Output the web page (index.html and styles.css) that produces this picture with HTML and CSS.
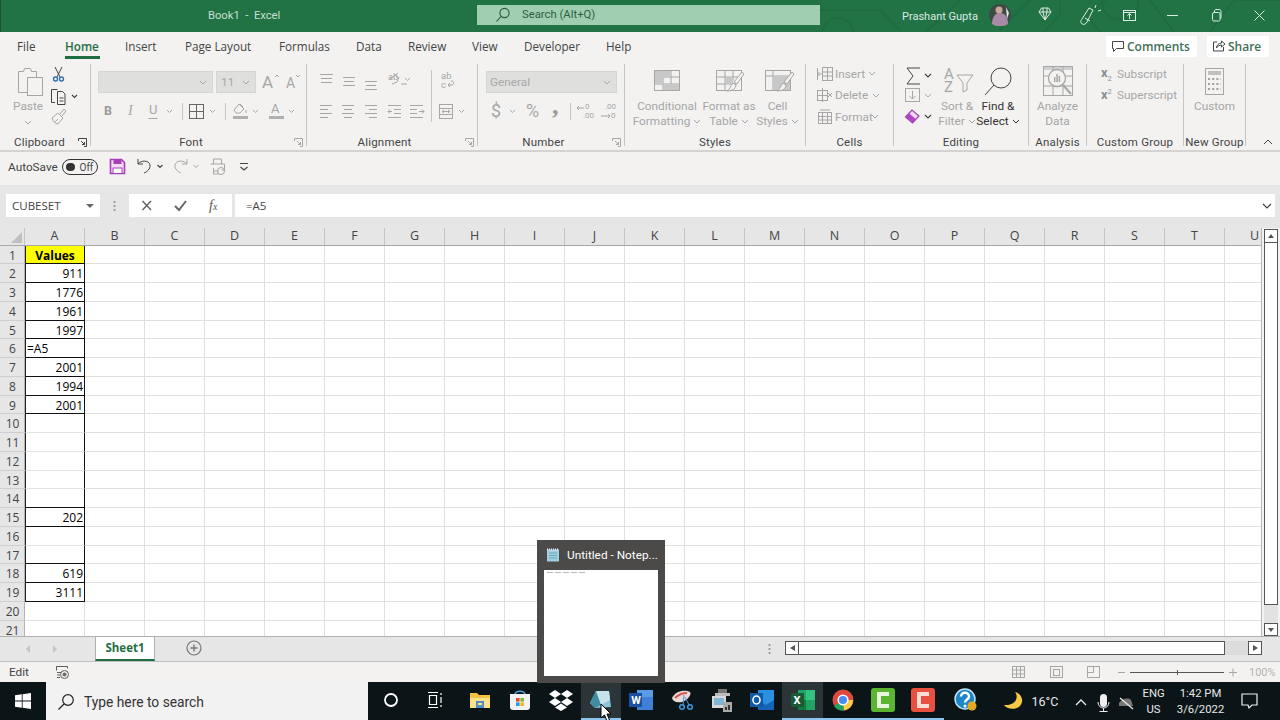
FILE: index.html
```html
<!DOCTYPE html>
<html lang="en">
<head>
<meta charset="utf-8">
<title>Book1 - Excel</title>
<link rel="stylesheet" href="styles.css">
</head>
<body>
<div class="app">
  <header class="titlebar">
    <svg class="circuit" width="460" height="32" viewBox="820 0 460 32"><g class="pat"><path d="M820 10h60l20 20M960 0l-34 32M1000 30l30-30M1060 0v14l-16 18M1100 32l-14-18 20-14M1150 0l24 32M1210 32l24-32h46"/><circle cx="838" cy="34" r="16"/><circle cx="1120" cy="2" r="18"/></g></svg>
    <div class="doc">Book1 &nbsp;-&nbsp; Excel</div>
    <div class="search"><svg width="16" height="16" viewBox="0 0 16 16"><circle cx="9.5" cy="6" r="4.6" class="gs"/><path d="M6 9.5 1.5 14.5" class="gs"/></svg><span>Search (Alt+Q)</span></div>
    <div class="user">Prashant Gupta</div>
    <svg class="winctl" width="295" height="32" viewBox="985 0 295 32">
      <circle cx="1000" cy="15" r="11" fill="#3d4a45"/><path d="M992 24c0-8 4-11 8-11s8 3 8 11l-4 2h-8z" fill="#a98aa5"/><circle cx="999" cy="10" r="3.5" fill="#c9a99a"/><path d="M1006 7l3 6-2 6z" fill="#e8e8e8"/>
      <g class="w"><path d="M1039 12l2.500-4h7l2.500 4-6 8zM1039 12h12M1043 12l2 8 2-8M1043 8l0 4M1047 8v4"/>
      <path d="M1082 24c-2-2-1-4 0-5l7-11 4 2-6 12c-1 2-3 3-5 2zM1085 18l5 3M1095 8l1-3M1098 11l3-1"/>
      <rect x="1123.500" y="10.500" width="12" height="10"/><path d="M1123.500 12.500h12M1129.500 19v-5M1127.500 15.500l2-2 2 2"/>
      <path d="M1167 15.500h11"/>
      <rect x="1212.500" y="12.500" width="7.500" height="8.500" rx="1.500"/><path d="M1214.500 12.500v-1.500c0-1 .5-1.500 1.500-1.500h3c1.500 0 2 1 2 2v6c0 1-.5 1.500-1 1.500"/>
      <path d="M1254.500 10.500l10 10M1264.500 10.500l-10 10"/></g>
    </svg>
  </header>

  <nav class="tabs">
    <div class="tab">File</div>
    <div class="tab on">Home</div>
    <div class="tab">Insert</div>
    <div class="tab">Page Layout</div>
    <div class="tab">Formulas</div>
    <div class="tab">Data</div>
    <div class="tab">Review</div>
    <div class="tab">View</div>
    <div class="tab">Developer</div>
    <div class="tab">Help</div>
    <div class="tabspace"></div>
    <div class="pill comments"><svg width="14" height="14" viewBox="0 0 14 14"><path d="M1.500 2.500h11v7h-7l-3 3v-3h-1z" class="k"/></svg>Comments</div>
    <div class="pill share"><svg width="14" height="14" viewBox="0 0 14 14"><path d="M5 3H1.500v9h10V8M4.500 9c0-3 2.500-5 5-5V2l3.500 3-3.500 3V6c-2 0-4 1-5 3z" class="k"/></svg>Share</div>
  </nav>

  <section class="ribbon">
    <div class="group g-clip">
      <div class="gbody">
        <div class="big paste">
          <svg width="46" height="34" viewBox="5 64 46 34"><path class="d" d="M18.500 71.500h5l1-3h6l1 3h5v6M18.500 71.500v21h9"/><rect class="f" x="27.500" y="77.500" width="15" height="18"/></svg>
          <div class="l">Paste</div>
          <svg class="chev" viewBox="0 0 8 5"><path d="M1 1l3 3 3-3"/></svg>
        </div>
        <svg class="strip" width="39" height="70" viewBox="51 64 39 70">
          <path d="M55 67l5 10M62 67l-5 10" class="k"/><circle cx="55.500" cy="79" r="2" fill="none" stroke="#2b6fb3" stroke-width="1.300"/><circle cx="61.500" cy="79" r="2" fill="none" stroke="#2b6fb3" stroke-width="1.300"/>
          <path class="k" d="M55 102.500h-3.500v-13h6M57.500 91.500h5l2.500 2.500v10.500h-7.500zM59.500 98h4M59.500 101h4"/>
          <path class="kc" d="M72 95l2.500 2.500 2.500-2.500"/>
          <path class="d" d="M52 118l6-5 5 5-5 6c-3 0-5-3-6-6zM60 114l4-5 2 2-4 5M55 122l3-3"/>
        </svg>
      </div>
      <div class="glabel left"><span>Clipboard</span><svg class="launch" width="9" height="9" viewBox="0 0 9 9"><path class="k" d="M.5 3V.5h8v8H6M3 3l3.500 3.500M6.500 4v2.500H4"/></svg></div>
    </div>

    <div class="group g-font">
      <div class="gbody col">
        <div class="r1">
          <div class="combo c-name"><svg class="chev" viewBox="0 0 8 5"><path d="M1 1l3 3 3-3"/></svg></div>
          <div class="combo c-size"><span>11</span><svg class="chev" viewBox="0 0 8 5"><path d="M1 1l3 3 3-3"/></svg></div>
          <svg width="44" height="22" viewBox="258 71 44 22"><text x="261" y="88" class="ta a1">A</text><path class="d" d="M274 77l2-2 2 2"/><text x="285" y="88" class="ta a2">A</text><path class="d" d="M295 75l2 2 2-2"/></svg>
        </div>
        <svg class="r2" width="209" height="24" viewBox="98 99 209 24">
          <text x="104" y="115" class="tb bold">B</text><text x="128" y="115" class="tb ital">I</text><text x="149" y="114" class="tb">U</text><path class="d" d="M148.500 118.500h9"/>
          <path class="d" d="M167 110l2.500 2.500 2.500-2.500"/><path class="sep" d="M182.500 103v17"/>
          <rect class="k2" x="189.500" y="104.500" width="14" height="14"/><path class="k2" d="M196.500 104.500v14M189.500 111.500h14"/><path class="d" d="M210 110l2.500 2.500 2.500-2.500"/><path class="sep" d="M225.500 103v17"/>
          <path class="d" d="M234 110l5-6 5 5-4 4h-4zM240 104l3 3M246 110v3"/><rect x="233" y="116" width="15" height="3" fill="#b0b0b0"/><path class="d" d="M253 110l2.500 2.500 2.500-2.500"/>
          <text x="271" y="113" class="ta a3">A</text><rect x="269" y="116" width="15" height="3" fill="#b0b0b0"/><path class="d" d="M289 110l2.500 2.500 2.500-2.500"/>
        </svg>
      </div>
      <div class="glabel"><i></i><span>Font</span><svg class="launch" width="9" height="9" viewBox="0 0 9 9"><path class="d" d="M.5 3V.5h8v8H6M3 3l3.500 3.500M6.500 4v2.500H4"/></svg></div>
    </div>

    <div class="group g-align">
      <div class="gbody">
        <svg width="170" height="70" viewBox="307 64 170 70">
          <path class="d" d="M320 74.500h13M321 78.500h11M321 82.500h11M343 77.500h12M344 81.500h10M343 85.500h12M365 81.500h12M366 85.500h10M365 89.500h12"/>
          <path class="d" d="M389 80l9-7M392 84l5-2 2-5M401 84h6M395 74l3 4"/><text x="388" y="80" class="ts r">ab</text><path class="d" d="M405 78l2.500 2.500 2.500-2.500"/>
          <path class="sep" d="M431.500 70v52"/>
          <text x="441" y="79" class="ts">ab</text><text x="441" y="88" class="ts">c</text><path class="d" d="M448 85h4c2 0 2-4 0-4h-1M448 85l2-2M448 85l2 2"/>
          <path class="d" d="M320 105.500h12M320 109.500h8M320 113.500h12M320 117.500h8M342 105.500h12M344 109.500h8M342 113.500h12M344 117.500h8M365 105.500h12M369 109.500h8M365 113.500h12M369 117.500h8"/>
          <path class="d" d="M388 105.500h13M394 109.500h7M394 113.500h7M388 117.500h13M388 111.500h4M388 111.500l2-2M388 111.500l2 2M410 105.500h13M410 109.500h7M410 113.500h7M410 117.500h13M424 111.500h-5M424 111.500l-2-2M424 111.500l-2 2"/>
          <rect class="d" x="439.500" y="104.500" width="13" height="14"/><path class="d" d="M439.500 108.500h13M439.500 114.500h13M442 111.500h8M442 111.500l2-1.500M442 111.500l2 1.500M450 111.500l-2-1.500M450 111.500l-2 1.500"/><path class="d" d="M459 110l2.500 2.500 2.500-2.500"/>
        </svg>
      </div>
      <div class="glabel"><i></i><span>Alignment</span><svg class="launch" width="9" height="9" viewBox="0 0 9 9"><path class="d" d="M.5 3V.5h8v8H6M3 3l3.500 3.500M6.500 4v2.500H4"/></svg></div>
    </div>

    <div class="group g-num">
      <div class="gbody col">
        <div class="combo c-gen"><span>General</span><svg class="chev" viewBox="0 0 8 5"><path d="M1 1l3 3 3-3"/></svg></div>
        <svg class="r2" width="146" height="24" viewBox="478 99 146 24">
          <text x="491" y="117" class="tb big1">$</text><path class="d" d="M510 110l2.500 2.500 2.500-2.500"/>
          <text x="526" y="117" class="tb big1">%</text><text x="552" y="114" class="tb big2">,</text><path class="sep" d="M570.500 103v17"/>
          <text x="585" y="109" class="tx">0</text><text x="583" y="118" class="tx">.00</text><path class="d" d="M577 108h7M577 108l2-2M577 108l2 2"/>
          <text x="605" y="109" class="tx">.00</text><text x="611" y="118" class="tx">0</text><path class="d" d="M601 116h9M610 116l-2-2M610 116l-2 2"/>
        </svg>
      </div>
      <div class="glabel"><i></i><span>Number</span><svg class="launch" width="9" height="9" viewBox="0 0 9 9"><path class="d" d="M.5 3V.5h8v8H6M3 3l3.500 3.500M6.500 4v2.500H4"/></svg></div>
    </div>

    <div class="group g-styles">
      <div class="gbody">
        <div class="big w-cond">
          <svg width="84" height="34" viewBox="625 64 84 34"><rect class="d" x="654.500" y="70.500" width="25" height="20"/><path class="d" d="M654.500 77h25M654.500 84h25M663 70.500v20M671 70.500v20"/><rect x="655" y="71" width="16" height="6" fill="#c8c8c8"/><rect x="655" y="77" width="8" height="7" fill="#c8c8c8"/><rect x="663" y="84" width="16" height="6" fill="#c8c8c8"/></svg>
          <div class="l">Conditional</div>
          <div class="l">Formatting <svg class="chev" viewBox="0 0 8 5"><path d="M1 1l3 3 3-3"/></svg></div>
        </div>
        <div class="big w-fmt">
          <svg width="40" height="34" viewBox="709 64 40 34"><rect class="d" x="716.500" y="70.500" width="25" height="20"/><path class="d" d="M716.500 77h25M716.500 84h20M725 70.500v20M733 70.500v10"/><rect x="725" y="77" width="8" height="7" fill="#c8c8c8"/><path class="f" d="M742 72l2 2-7 10-3-2zM733 83l3 2c0 3-3 6-9 6 3-1 3-5 6-8z"/></svg>
          <div class="l">Format as</div>
          <div class="l">Table <svg class="chev" viewBox="0 0 8 5"><path d="M1 1l3 3 3-3"/></svg></div>
        </div>
        <div class="big w-cell">
          <svg width="57" height="34" viewBox="749 64 57 34"><rect class="d" x="765.500" y="70.500" width="25" height="20"/><path class="d" d="M765.500 76h25M773 70.500v20"/><rect x="773" y="76" width="17" height="14" fill="#c8c8c8"/><path class="f" d="M792 72l2 2-7 10-3-2zM783 83l3 2c0 3-3 6-9 6 3-1 3-5 6-8z"/></svg>
          <div class="l">Cell</div>
          <div class="l">Styles <svg class="chev" viewBox="0 0 8 5"><path d="M1 1l3 3 3-3"/></svg></div>
        </div>
      </div>
      <div class="glabel solo"><span>Styles</span></div>
    </div>

    <div class="group g-cells">
      <div class="gbody col rows">
        <div class="rowitem"><svg width="16" height="16" viewBox="0 0 16 16"><rect class="d" x="5.500" y="1.500" width="10" height="13"/><path class="d" d="M5.500 6h10M5.500 10h10M10.500 1.500v13M.5 8h5M.5 8l2-2M.5 8l2 2M.5 2v12"/></svg><span class="ct">Insert</span><svg class="chev c1" viewBox="0 0 8 5"><path d="M1 1l3 3 3-3"/></svg></div>
        <div class="rowitem"><svg width="16" height="16" viewBox="0 0 16 16"><rect class="d" x=".5" y="3.500" width="10" height="10"/><path class="d" d="M.5 8.500h10M5.500 1v14M11 6l4 4M15 6l-4 4"/></svg><span class="ct">Delete</span><svg class="chev c2" viewBox="0 0 8 5"><path d="M1 1l3 3 3-3"/></svg></div>
        <div class="rowitem"><svg width="16" height="16" viewBox="0 0 16 16"><rect class="d" x="1.500" y="3.500" width="13" height="11"/><path class="d" d="M1.500 7.500h13M1.500 11h13M5.500 3.500v11M10.500 3.500v11M3 1h10"/></svg><span class="ct">Format</span><svg class="chev c3" viewBox="0 0 8 5"><path d="M1 1l3 3 3-3"/></svg></div>
      </div>
      <div class="glabel solo"><span>Cells</span></div>
    </div>

    <div class="group g-edit">
      <div class="gbody">
        <svg width="41" height="70" viewBox="894 64 41 70">
          <path class="k" d="M920 68h-13l6 8-6 8h13"/><path class="kc" d="M925 74l3 3 3-3"/>
          <rect class="d" x="905.500" y="88.500" width="14" height="13"/><path class="d" d="M912.500 91v8M909.500 96l3 3 3-3M925 94l3 3 3-3"/>
          <path d="M905.500 117l6.500-7 7 6-6.500 7z" fill="#f1d6f5" stroke="#9a3fb0" stroke-width="1.200"/><path d="M905.500 117l3.500-3.700 7 6-3 3.700z" fill="#b146c2"/><path class="kc" d="M925 115l3 3 3-3"/>
        </svg>
        <div class="big w-sort">
          <svg width="44" height="34" viewBox="935 64 44 34"><text x="944" y="79" class="tl">A</text><text x="944" y="92" class="tl">Z</text><path class="d" d="M957 75h16l-6 8v7l-4 2v-9z"/></svg>
          <div class="l">Sort &amp;</div>
          <div class="l">Filter <svg class="chev" viewBox="0 0 8 5"><path d="M1 1l3 3 3-3"/></svg></div>
        </div>
        <div class="big w-find act">
          <svg width="38" height="34" viewBox="979 64 38 34"><circle cx="1001" cy="78" r="10" class="k"/><path class="k" d="M994 85l-9 10"/></svg>
          <div class="l">Find &amp;</div>
          <div class="l">Select <svg class="chev" viewBox="0 0 8 5"><path d="M1 1l3 3 3-3"/></svg></div>
        </div>
      </div>
      <div class="glabel solo"><span>Editing</span></div>
    </div>

    <div class="group g-an">
      <div class="gbody">
        <div class="big w-an">
          <svg width="57" height="34" viewBox="1029 64 57 34"><rect class="d" x="1043.500" y="66.500" width="29" height="29"/><path fill="#d0d0d0" d="M1044 67h28v3h-28z"/><path class="d" d="M1043.500 76h29M1043.500 86h29M1053 66.500v29M1063 66.500v29"/><circle cx="1057" cy="78" r="8.500" fill="#f3f2f1" stroke="#a6a6a6" stroke-width="1.300"/><path fill="#a6a6a6" d="M1054 77h1.500v5H1054zM1056.300 74h1.500v8h-1.500zM1058.600 76h1.500v6h-1.500z"/><path stroke="#a6a6a6" stroke-width="2" d="M1063 85l8 9"/></svg>
          <div class="l">Analyze</div>
          <div class="l">Data</div>
        </div>
      </div>
      <div class="glabel solo"><span>Analysis</span></div>
    </div>

    <div class="group g-cust">
      <div class="gbody col rows">
        <div class="rowitem"><b class="sc">x<sub>2</sub></b><span>Subscript</span></div>
        <div class="rowitem"><b class="sc">x<sup>2</sup></b><span>Superscript</span></div>
      </div>
      <div class="glabel solo"><span>Custom Group</span></div>
    </div>

    <div class="group g-new">
      <div class="gbody">
        <div class="big w-new">
          <svg width="61" height="34" viewBox="1184 64 61 34"><rect class="d" x="1205.500" y="68.500" width="18" height="26"/><rect x="1208" y="71" width="13" height="4" fill="#c0c0c0"/><path stroke="#a0a0a0" stroke-width="2" stroke-dasharray="2 2.200" d="M1208 79h13M1208 84h13M1208 89h13"/></svg>
          <div class="l">Custom</div>
        </div>
      </div>
      <div class="glabel solo"><span>New Group</span></div>
    </div>

    <div class="collapse"><svg width="10" height="6" viewBox="0 0 10 6"><path class="k" d="M1 5l4-4 4 4"/></svg></div>
  </section>

  <section class="qat">
    <span class="as">AutoSave</span>
    <div class="toggle"><i></i><span>Off</span></div>
    <svg width="180" height="20" viewBox="102 158 180 20">
      <path d="M110.500 160.500h11l3 3v11h-14z" fill="#f2dcf5" stroke="#a73cbc" stroke-width="1.600"/><rect x="113.500" y="160.500" width="8" height="4.500" fill="#a73cbc"/><rect x="113" y="169" width="9" height="5.500" fill="#fff" stroke="#a73cbc"/>
      <path class="k" d="M138 160v5h5M138 165c3-4 11-4 12 1 .5 4-3 7-6 8"/><path class="kc" d="M157.500 166l2.500 2.500 2.500-2.500"/>
      <path class="d" d="M187 160v5h-5M187 165c-3-4-11-4-12 1-.5 4 3 7 6 8"/><path class="d" d="M193.500 166l2.500 2.500 2.500-2.500"/>
      <path class="d" d="M213.500 165v-5h8v5M210.500 165h14v6h-3M213.500 172h5M213.500 169v6h5"/><circle class="d" cx="221" cy="172" r="3.500"/>
      <path class="kc" d="M240 164.500h8M240.500 168l3.500 3 3.500-3"/>
    </svg>
  </section>

  <section class="fbar">
    <div class="namebox"><span>CUBESET</span><i class="tri"></i></div>
    <div class="dots"></div>
    <div class="fxbox">
      <svg width="103" height="24" viewBox="129 194 103 24"><path d="M142.500 201l8.500 9M151 201l-8.500 9" stroke="#666" stroke-width="1.500" fill="none"/><path d="M175 206l4 4 7-9" stroke="#666" stroke-width="2" fill="none"/><text x="209" y="210" class="fx">f</text><text x="213" y="210" class="fx2">x</text></svg>
    </div>
    <div class="formula"><span>=A5</span><svg width="10" height="6" viewBox="0 0 10 6"><path class="kc" d="M1 1l4 4 4-4"/></svg></div>
  </section>

  <section class="sheet">
    <div class="grid">
      <div class="colhead">
        <div class="corner"><i></i></div>
        <div>A</div><div>B</div><div>C</div><div>D</div><div>E</div><div>F</div><div>G</div><div>H</div><div>I</div><div>J</div><div>K</div><div>L</div><div>M</div><div>N</div><div>O</div><div>P</div><div>Q</div><div>R</div><div>S</div><div>T</div><div>U</div>
      </div>
      <div class="row"><div class="rh">1</div><div class="a head">Values</div><div class="rest"></div></div>
      <div class="row"><div class="rh">2</div><div class="a num">911</div><div class="rest"></div></div>
      <div class="row"><div class="rh">3</div><div class="a num">1776</div><div class="rest"></div></div>
      <div class="row"><div class="rh">4</div><div class="a num">1961</div><div class="rest"></div></div>
      <div class="row"><div class="rh">5</div><div class="a num">1997</div><div class="rest"></div></div>
      <div class="row"><div class="rh">6</div><div class="a num txt">=A5</div><div class="rest"></div></div>
      <div class="row"><div class="rh">7</div><div class="a num">2001</div><div class="rest"></div></div>
      <div class="row"><div class="rh">8</div><div class="a num">1994</div><div class="rest"></div></div>
      <div class="row"><div class="rh">9</div><div class="a num">2001</div><div class="rest"></div></div>
      <div class="row"><div class="rh">10</div><div class="a"></div><div class="rest"></div></div>
      <div class="row"><div class="rh">11</div><div class="a"></div><div class="rest"></div></div>
      <div class="row"><div class="rh">12</div><div class="a"></div><div class="rest"></div></div>
      <div class="row"><div class="rh">13</div><div class="a"></div><div class="rest"></div></div>
      <div class="row"><div class="rh">14</div><div class="a ln"></div><div class="rest"></div></div>
      <div class="row"><div class="rh">15</div><div class="a num">202</div><div class="rest"></div></div>
      <div class="row"><div class="rh">16</div><div class="a"></div><div class="rest"></div></div>
      <div class="row"><div class="rh">17</div><div class="a ln"></div><div class="rest"></div></div>
      <div class="row"><div class="rh">18</div><div class="a num">619</div><div class="rest"></div></div>
      <div class="row"><div class="rh">19</div><div class="a num">3111</div><div class="rest"></div></div>
      <div class="row"><div class="rh">20</div><div class="a plain"></div><div class="rest"></div></div>
      <div class="row"><div class="rh">21</div><div class="a plain"></div><div class="rest"></div></div>
    </div>
    <div class="vscroll">
      <div class="sbtn"><i class="up"></i></div>
      <div class="vthumb"></div>
      <div class="vtrack"></div>
      <div class="sbtn dn"><i class="down"></i></div>
    </div>
  </section>

  <section class="sheetbar">
    <svg width="95" height="24" viewBox="0 0 95 24"><path d="M30 8v8l-4-4zM53 8v8l4-4z" fill="#c4c4c4"/></svg>
    <div class="sheettab">Sheet1</div>
    <svg class="addsheet" width="18" height="18" viewBox="0 0 18 18"><circle cx="9" cy="9" r="7" fill="none" stroke="#777" stroke-width="1.200"/><path d="M5.500 9h7M9 5.500v7" stroke="#777" stroke-width="1.400"/></svg>
    <div class="hdots"></div>
    <div class="hscroll">
      <div class="hbtn"><i class="lf"></i></div>
      <div class="hthumb"></div>
      <div class="htrack"></div>
      <div class="hbtn"><i class="rt"></i></div>
    </div>
  </section>

  <footer class="status">
    <span class="st">Edit</span>
    <svg class="macro" width="15" height="15" viewBox="0 0 15 15"><path class="k" d="M1.500 5.500v-4h11v2M1.500 1.500h11M2 7.500h4M2 10h3M2 12.500h3"/><circle class="k" cx="9.500" cy="9.500" r="4"/><circle cx="9.500" cy="9.500" r="2" fill="#555"/></svg>
    <svg class="views" width="268" height="20" viewBox="1010 662 268 20">
      <rect class="d" x="1012.500" y="666.500" width="12" height="11"/><path class="d" d="M1012.500 670h12M1012.500 674h12M1016.500 666.500v11M1020.500 666.500v11"/>
      <rect class="d" x="1050.500" y="666.500" width="12" height="11"/><rect class="d" x="1053.500" y="669.500" width="6" height="6"/>
      <rect class="d" x="1087.500" y="666.500" width="12" height="11"/><path class="d" d="M1093.500 666.500v6h-6"/>
      <path class="d" d="M1118 672.500h7M1229 672.500h8M1233 668.500v8"/><path d="M1130 672.500h94" stroke="#555" fill="none"/><path d="M1177.500 670v5" stroke="#555" fill="none"/>
    </svg>
    <span class="pct">100%</span>
  </footer>

  <div class="taskbar">
    <div class="start"><svg width="16" height="16" viewBox="0 0 16 16"><path fill="#fff" d="M0 2.300 6.800 1.300v6.300H0zM7.600 1.200 16 0v7.600H7.600zM0 8.400h6.800v6.300L0 13.700zM7.600 8.400H16V16L7.600 14.800z"/></svg></div>
    <div class="tsearch"><svg width="18" height="18" viewBox="0 0 18 18"><circle cx="11" cy="7" r="5.300" fill="none" stroke="#222" stroke-width="1.200"/><path d="M7 11 1.500 16.500" stroke="#222" stroke-width="1.200"/></svg><span>Type here to search</span></div>
    <div class="tslot cort"><svg width="16" height="16" viewBox="0 0 16 16"><circle cx="8" cy="8" r="6" fill="none" stroke="#fff" stroke-width="1.800"/></svg></div>
    <div class="tslot tv"><svg width="18" height="16" viewBox="0 0 18 16"><path d="M1 .5h10M1 15.500h10M2.500 3.500h7v9h-7zM14 1v2M14 5v6M14 13v2" stroke="#fff" fill="none" stroke-width="1.200"/></svg></div>
    <div class="tslot"><svg width="22" height="18" viewBox="0 0 22 18"><path d="M1 2h7l2 2h11v13H1z" fill="#f5c242"/><rect x="1" y="7" width="20" height="10" fill="#fde08a"/><rect x="7" y="10" width="8" height="7" fill="#4e8fc4"/><rect x="9" y="12" width="4" height="2" fill="#fde08a"/></svg></div>
    <div class="tslot"><svg width="22" height="22" viewBox="0 0 22 22"><path d="M6 6c0-5 10-5 10 0" fill="none" stroke="#4ea5d8" stroke-width="1.500"/><path d="M1 5h20v13c0 2-1 3-3 3H4c-2 0-3-1-3-3z" fill="#f2f2f2"/><rect x="7" y="9" width="3.600" height="3.600" fill="#e74c2e"/><rect x="11.400" y="9" width="3.600" height="3.600" fill="#7db93a"/><rect x="7" y="13.400" width="3.600" height="3.600" fill="#2e9be0"/><rect x="11.400" y="13.400" width="3.600" height="3.600" fill="#f4b81c"/></svg></div>
    <div class="tslot"><svg width="24" height="22" viewBox="0 0 24 22"><path fill="#fff" d="M6 1l6 4-6 4-6-4zM18 1l6 4-6 4-6-4zM0 13l6-4 6 4-6 4zM24 13l-6-4-6 4 6 4zM6 18.500l6-4 6 4-6 3.500z"/></svg></div>
    <div class="tslot act"><svg width="24" height="24" viewBox="0 0 24 24"><path d="M7 3h13l2 16-16 1-5-5z" fill="#8fc4d8"/><path d="M7 3h13l1 9-11 6-5-3z" fill="#c7e2ea"/><path d="M1 15l6-12 5 14-6 3z" fill="#3f8ca3"/></svg></div>
    <div class="tslot"><svg width="24" height="20" viewBox="0 0 24 20"><path d="M8 0h16v20H8z" fill="#3f7fd6"/><path d="M8 0h16v7H8z" fill="#5a9be6"/><rect y="3" width="13" height="14" fill="#1a4fa3"/></svg><b class="lt wd">W</b></div>
    <div class="tslot"><svg width="24" height="22" viewBox="0 0 24 22"><path d="M2 9c3-7 13-9 18-6 2 2-2 8-8 10-5 1-9 0-10-4z" fill="#ecd9d6"/><path d="M5 9c3-3 8-5 12-5" stroke="#d1584c" fill="none" stroke-width="2"/><circle cx="12" cy="18" r="2.300" fill="none" stroke="#3d9ae0" stroke-width="1.500"/><circle cx="20" cy="18" r="2.300" fill="none" stroke="#3d9ae0" stroke-width="1.500"/><path d="M14 6l-1 10M15 8l4 8" stroke="#3d9ae0" fill="none"/></svg></div>
    <div class="tslot"><svg width="22" height="24" viewBox="0 0 22 24"><path d="M7 1h9v4H7z" fill="#777"/><path d="M4 5h15v3H4z" fill="#bbb"/><rect x="1" y="8" width="14" height="12" fill="#d8d8d8"/><rect x="3" y="10" width="10" height="7" fill="#7fb6d8"/><rect x="12" y="14" width="9" height="10" fill="#aaa"/><path d="M14 19h2v3h-2zM17 17h2v5h-2z" fill="#333"/></svg></div>
    <div class="tslot"><svg width="24" height="20" viewBox="0 0 24 20"><path d="M8 0h16v20H8z" fill="#2b90e0"/><path d="M8 10l8 5 8-5v10H8z" fill="#1464b8"/><rect y="3" width="13" height="14" fill="#0f5aa8"/><ellipse cx="6.500" cy="10" rx="3.500" ry="4" fill="none" stroke="#fff" stroke-width="1.600"/></svg></div>
    <div class="tslot act"><svg width="24" height="20" viewBox="0 0 24 20"><path d="M7 0h17v20H7z" fill="#21a366"/><path d="M15 0h9v10h-9z" fill="#33c481"/><path d="M7 10h8v10H7z" fill="#107c41"/><rect y="3" width="13" height="14" fill="#185c37"/></svg><b class="lt xl">X</b></div>
    <div class="tslot ind"><svg width="22" height="22" viewBox="0 0 22 22"><circle cx="11" cy="11" r="10.500" fill="#dd4b3e"/><path d="M11 11 2 17a10.500 10.500 0 0 0 10 4.500z" fill="#1ea362"/><path d="M11 11l10 0a10.500 10.500 0 0 1-9 10.500z" fill="#ffce44"/><circle cx="11" cy="11" r="4.800" fill="#4a8af4" stroke="#fff" stroke-width="1.500"/></svg></div>
    <div class="tslot ind"><svg width="24" height="24" viewBox="0 0 24 24"><rect width="24" height="24" rx="3" fill="#5cb531"/><path d="M18 6H8v12h10" fill="none" stroke="#e7f6dd" stroke-width="4"/></svg></div>
    <div class="tslot ind"><svg width="24" height="24" viewBox="0 0 24 24"><rect width="24" height="24" rx="3" fill="#e8503f"/><path d="M18 6H8v12h10" fill="none" stroke="#fbdcd7" stroke-width="4"/></svg></div>
    <div class="tslot help"><svg width="24" height="24" viewBox="0 0 24 24"><circle cx="11" cy="11" r="10" fill="#1d86c8" stroke="#bfe3f5" stroke-width="1.500"/><path d="M7 8.500c0-5 8-5 8 0 0 3-4 3-4 6" fill="none" stroke="#fff" stroke-width="2.500"/><circle cx="11" cy="18" r="1.500" fill="#fff"/><circle cx="18" cy="18" r="4.500" fill="#e5a823"/></svg></div>
    <div class="moon"><svg width="20" height="20" viewBox="0 0 20 20"><path d="M12 1c4 5 1 14-11 13 3 5 16 6 18-3 1-5-3-9-7-10z" fill="#f6c944"/></svg></div>
    <span class="temp">16°C</span>
    <svg class="tray" width="74" height="37" viewBox="1066 683 74 37"><path d="M1076 705l5-5 5 5" stroke="#eee" fill="none" stroke-width="1.300"/><rect x="1100" y="694" width="7" height="13" rx="3.500" fill="#eee"/><path d="M1098 702c0 8 11 8 11 0M1103.500 708v3M1099.500 711.500h8" stroke="#eee" fill="none"/><path d="M1119 703c2-4 9-6 12-3l2 6h-14z" fill="#777"/><path d="M1120 698l13 11" stroke="#eee" stroke-width="1.200"/></svg>
    <div class="two lang"><span>ENG</span><span>US</span></div>
    <div class="two clock"><span>1:42 PM</span><span>3/6/2022</span></div>
    <div class="notif"><svg width="18" height="17" viewBox="0 0 18 17"><path d="M1 1h15v11h-5l-3 3-1-3H1z" fill="none" stroke="#eee" stroke-width="1.200"/></svg></div>
  </div>
</div>

<div class="peek">
  <div class="peekhead"><svg width="14" height="14" viewBox="0 0 14 14"><rect x="1" y="1.500" width="12" height="12" fill="#9fd0e0"/><path d="M1 1.500h12" stroke="#eef" stroke-width="2" stroke-dasharray="1 1"/><path d="M3 5h8M3 7.500h8M3 10h8" stroke="#6aa5bd"/></svg><span>Untitled - Notep...</span></div>
  <div class="peekbody"><i></i><i></i><i></i><i></i><i></i></div>
</div>
<svg class="cursor" width="14" height="20" viewBox="0 0 14 20"><path d="M1 1v14l3.500-3 2.500 6 2.500-1-2.500-6H11z" fill="#fff" stroke="#000"/></svg>
</body>
</html>
```

FILE: styles.css
```css
*{box-sizing:border-box}
html,body{margin:0;padding:0}
body{width:1280px;height:720px;overflow:hidden;position:relative;font-family:"Open Sans","Noto Sans",sans-serif;font-size:12px;color:#444;background:#f3f2f1}
svg{display:block;overflow:visible}
.app{display:flex;flex-direction:column;width:1280px;height:720px}

.titlebar{height:32px;background:#217346;display:flex;align-items:center;position:relative;color:#dcebe2;flex:none;border-left:1px solid #1a5436;font-family:Roboto,sans-serif}
.circuit{position:absolute;left:819px;top:0;overflow:hidden}
.pat{fill:none;stroke:#1f6c41;stroke-width:2}
.doc{width:476px;padding-left:207px;font-size:11.200px;color:#c9dfd1;position:relative;margin-top:-2px}
.search{width:343px;height:20px;margin-top:-3px;background:#9fcfb0;display:flex;align-items:center;gap:11px;padding-left:18px;color:#2e5e43;font-size:11.300px;position:relative;flex:none}
.gs{fill:none;stroke:#22573a;stroke-width:1.100}
.user{width:165px;padding-left:82px;white-space:nowrap;font-size:11px;position:relative;margin-top:1px;flex:none}
.winctl{position:relative;flex:none}
.w{fill:none;stroke:#dcebe2;stroke-width:1}

.tabs{height:30px;display:flex;align-items:center;flex:none;padding-left:17px;font-size:11.700px;background:#f3f2f1}
.tab{height:30px;line-height:29px;position:relative;white-space:nowrap}
.tab:nth-child(1){width:48px}
.tab:nth-child(2){width:60px}
.tab:nth-child(3){width:60px}
.tab:nth-child(4){width:94px}
.tab:nth-child(5){width:77px}
.tab:nth-child(6){width:52px}
.tab:nth-child(7){width:64px}
.tab:nth-child(8){width:52px}
.tab:nth-child(9){width:82px}
.tab:nth-child(10){width:40px}
.tab.on{color:#1f6e43;font-weight:600}
.tab.on::after{content:"";display:block;width:35px;height:2.500px;background:#1e6e42;margin-top:-5px}
.tabspace{flex:1}
.pill{height:21px;background:#fff;display:flex;align-items:center;gap:2px;margin-top:-2px;font-size:12px;color:#3f6f58;font-weight:600}
.comments{width:91px;padding-left:5px}
.share{width:62px;padding-left:5px;margin:-2px 11px 0 10px}

.ribbon{height:90px;display:flex;padding-top:2px;border-bottom:2px solid #d4d3d1;flex:none;font-family:Roboto,sans-serif;font-size:11.800px;color:#a6a6a6;position:relative}
.group{height:82px;display:flex;flex-direction:column;border-right:1px solid #c8c6c4;flex:none}
.g-clip{width:91px}.g-font{width:216px}.g-align{width:171px}.g-num{width:147px}.g-styles{width:181px}.g-cells{width:88px}.g-edit{width:135px}.g-an{width:58px}.g-cust{width:97px}.g-new{width:62px}
.gbody{height:70px;display:flex;flex:none}
.gbody.col{flex-direction:column}
.glabel{height:12px;line-height:16px;display:grid;grid-template-columns:1fr auto 1fr;align-items:start;color:#444;font-size:11.500px;white-space:nowrap;padding-right:15px;letter-spacing:.2px}
.glabel.solo{display:block;text-align:center;padding:0}
.glabel.left{display:flex;justify-content:space-between;padding-left:14px;padding-right:3px}
.launch{justify-self:end;margin:4px -12px 0 0}
.glabel.left .launch{margin-right:0}
.big{display:flex;flex-direction:column;align-items:center;flex:none}
.big .l{line-height:15px;white-space:nowrap;display:flex;align-items:center;gap:3px}
.big>svg:first-child{flex:none;margin-bottom:1px}
.paste{width:46px;margin-left:5px}
.paste>.chev{margin-top:6px}
.strip{flex:none}
.chev{width:8px;height:5px;flex:none;fill:none;stroke:#a6a6a6}
.d{fill:none;stroke:#a6a6a6}
.k{fill:none;stroke:#444}
.k2{fill:none;stroke:#666}
.kc{fill:none;stroke:#444;stroke-width:1.200}
.f{fill:#f3f2f1;stroke:#a6a6a6}
.sep{stroke:#c8c6c4;fill:none}

.g-font .gbody{padding-left:7px}
.r1{display:flex;margin-top:7px;height:22px;gap:3px;align-items:center;flex:none}
.r1 .chev{margin-left:auto}
.r2{margin-top:6px;flex:none}
.combo{height:22px;background:#dfdfde;border:1px solid #d6d6d5;display:flex;align-items:center;padding:0 5px 0 3px;color:#a9a9a9;font-size:11.800px}
.c-name{width:115px}.c-size{width:40px;padding-left:4px}
.c-gen{width:131px;margin:7px 0 0 8px;flex:none}
.c-gen .chev{margin-left:auto}
.ta{fill:#a6a6a6;font-size:17px}
.a2{font-size:14px}.a3{font-size:13px}
.tb{fill:#a6a6a6;font-size:13px}
.bold{font-weight:700;font-size:12.500px;fill:#9a9a9a}
.ital{font-family:"Liberation Serif",serif;font-style:italic;font-size:14px}
.big1{font-size:18px}
.big2{font-size:26px;font-weight:800;font-family:"Liberation Serif",serif;fill:#9a9a9a}
.ts{fill:#a6a6a6;font-size:9.500px}
.r{font-size:9px}
.tx{fill:#a6a6a6;font-size:8px}
.tl{fill:#a6a6a6;font-size:15px}
.w-cond{width:84px}.w-fmt{width:40px}.w-cell{width:57px}.w-sort{width:44px}.w-find{width:38px}.w-an{width:57px}.w-new{width:61px}
.act{color:#333}
.act .chev{stroke:#333}
.gbody.rows{height:71px;margin-top:-1px}
.rowitem{height:21.500px;display:flex;align-items:center;gap:2px;white-space:nowrap;flex:none}
.ct{width:35px}
.g-cells .rows{padding-left:11px}
.c1{margin-left:-4px}.c2{margin-left:0}.c3{margin-left:-1px}
.g-cust .rows{padding-left:14px}
.sc{font-size:13px;color:#8d8d8d;width:14px;font-weight:700;line-height:10px}
.sc sub,.sc sup{font-size:7px;font-weight:400;line-height:0}
.collapse{margin:75px 0 0 17px}

.qat{height:33px;display:flex;align-items:center;padding-left:8px;background:#f3f2f1;flex:none;font-size:11.500px;padding-bottom:3px}
.as{width:54px;font-family:Roboto,sans-serif;font-size:11.800px}
.toggle{width:36px;height:16px;border:1px solid #333;border-radius:8px;display:flex;align-items:center;padding-left:3px;gap:5px;font-size:10px;margin-right:4px;font-family:Roboto,sans-serif}
.toggle i{width:8.500px;height:8.500px;border-radius:50%;background:#333;flex:none}

.fbar{height:43px;background:#e6e6e6;display:flex;padding-top:8px;flex:none;font-size:11.500px;border-top:1px solid #e2e2e2}
.namebox{width:94px;height:23px;margin-left:6px;background:#fff;display:flex;align-items:center;justify-content:space-between;padding:0 6px}
.tri{width:0;height:0;border:4px solid transparent;border-top:4.500px solid #666;border-bottom:0}
.dots{width:29px;background:radial-gradient(circle,#9c9c9c 1px,transparent 1.200px) center top/3px 4px repeat-y;height:12px;margin-top:6px}
.fxbox{width:103px;height:23px;background:#fff}
.fx{font-family:"Liberation Serif",serif;font-style:italic;font-size:14px;fill:#555}
.fx2{font-family:"Liberation Serif",serif;font-style:italic;font-size:10px;fill:#555}
.formula{width:1040px;height:23px;margin-left:3px;background:#fff;display:flex;align-items:center;justify-content:space-between;padding:0 3px 0 11px}

.sheet{height:408px;display:flex;background:#fff;flex:none;overflow:hidden}
.grid{width:1262px;flex:none;overflow:hidden;border-right:1px solid #b5b5b5}
.colhead{height:17.600px;display:grid;grid-template-columns:25px repeat(21,60px);background:#e6e6e6;border-bottom:1.500px solid #a8a8a8;font-size:12.500px;line-height:16px;text-align:center;color:#444}
.colhead>div{border-right:1px solid #c4c4c4}
.corner i{display:block;width:0;height:0;border-left:11px solid transparent;border-bottom:11px solid #c0c0c0;margin:4px 0 0 11px}
.row{height:18.750px;display:grid;grid-template-columns:25px 60px 1fr;grid-template-rows:18.750px;font-size:12px;line-height:20px;color:#000}
.rh{background:#e6e6e6;border-right:1px solid #b5b5b5;border-bottom:1px solid #cfcfcf;color:#444;text-align:center;font-size:12px;padding-left:1px}
.a{background:#fff;border-left:1px solid #222;border-right:1.500px solid #111;border-bottom:1px solid #e4e4e4}
.a.num,.a.head,.a.ln{border-bottom:1px solid #111}
.a.num{text-align:right;padding-right:1px}
.a.txt{text-align:left;padding-left:1px}
.a.head{background:#ff0;font-weight:700;text-align:center}
.a.plain{border:0;border-right:1px solid #e0e0e0;border-bottom:1px solid #e0e0e0}
.rest{border-bottom:1px solid #e0e0e0;background-image:linear-gradient(to left,#e0e0e0 1px,transparent 1px);background-size:60px 100%}
.vscroll{flex:none;width:18px;height:408px;background:#f3f2f1;padding:1px 2px 0 2px;display:flex;flex-direction:column}
.sbtn{height:14px;background:#fff;border:1px solid #555;display:flex;align-items:center;justify-content:center;flex:none}
.sbtn.dn{height:13px}
.vthumb{height:362px;background:#fff;border:1px solid #555;border-top:0;flex:none}
.vtrack{height:18px;background:#e2e2e2;flex:none}
.up,.down,.lf,.rt{width:0;height:0;border:3.500px solid transparent}
.up{border-bottom:4px solid #555;border-top:0}
.down{border-top:4px solid #555;border-bottom:0}
.lf{border-right:5px solid #555;border-left:0}
.rt{border-left:5px solid #555;border-right:0}

.sheetbar{height:26px;display:flex;align-items:center;background:#e6e6e6;border-top:1px solid #b0b0b0;border-bottom:1px solid #c0c0c0;flex:none}
.sheetbar>svg:first-child{flex:none}
.sheettab{width:60px;height:24px;margin-top:-1px;background:#fff;border-left:1px solid #b0b0b0;border-right:1px solid #b0b0b0;border-bottom:2px solid #1e6e42;color:#1f6e43;font-weight:700;font-size:11.500px;text-align:center;line-height:21px;flex:none}
.addsheet{margin:-2px 0 0 30px;flex:none}
.hdots{width:3px;height:12px;margin-left:565px;background:radial-gradient(circle,#9c9c9c 1px,transparent 1.200px) center top/3px 4px repeat-y;flex:none}
.hscroll{display:flex;margin-left:14px;height:14px;flex:none;margin-top:-2px}
.hbtn{width:14px;height:14px;background:#fff;border:1px solid #555;display:flex;align-items:center;justify-content:center;flex:none}
.hthumb{width:426px;background:#fff;border-top:1px solid #555;border-bottom:1px solid #555;border-right:1px solid #555;flex:none}
.htrack{width:23px;background:#dcdcdc;flex:none}

.status{height:20px;display:flex;align-items:center;background:#f3f2f1;flex:none;position:relative}
.st{width:55px;padding-left:9px;flex:none;font-family:Roboto,sans-serif;font-size:11.800px}
.macro{opacity:.85;flex:none}
.views{margin-left:940px;flex:none;width:268px}
.pct{flex:none;margin-left:-29px;color:#b4b4b4;font-size:11px;font-family:Roboto,sans-serif}

.taskbar{height:38px;background:#0b1518;display:flex;align-items:center;flex:none;color:#e8e8e8;font-family:Roboto,sans-serif}
.start{width:46px;height:38px;display:flex;align-items:center;justify-content:center;flex:none}
.tsearch{width:322px;height:38px;background:#f2f2f2;display:flex;align-items:center;padding:1px 0 0 11px;gap:9px;color:#333;font-size:13.800px;flex:none}
.tslot{width:40.300px;height:38px;display:flex;align-items:center;justify-content:center;position:relative;flex:none;border-bottom:2px solid transparent}
.tslot.cort,.tslot.tv{width:45.500px}
.tslot.tv{margin-right:1px}
.tslot.act{background:#2b3538;border-bottom-color:#8cc4ec}
.tslot.ind{border-bottom:2px solid #8cc4ec}
.tslot.help{width:47px;margin-left:-1px}
.lt{position:absolute;color:#fff;font-size:11px;line-height:12px}
.wd{left:10px;top:13px}
.xl{left:11px;top:13px}
.moon{width:42px;display:flex;justify-content:flex-start;padding-left:13px;flex:none}
.temp{width:34px;font-size:12.500px;white-space:nowrap;flex:none}
.tray{flex:none;width:74px}
.two{display:flex;flex-direction:column;align-items:center;line-height:16px;font-size:11.300px;flex:none;padding-top:1px}
.lang{width:28px}
.clock{width:66px}
.notif{width:46px;display:flex;justify-content:center;flex:none;padding-right:14px}

.peek{position:absolute;left:537px;top:540px;width:128px;height:143px;background:#4b4a48;padding:0 7px;font-family:Roboto,sans-serif}
.peekhead{height:29px;display:flex;align-items:center;gap:7px;margin-left:2px;color:#fff;font-size:11.800px;white-space:nowrap}
.peekbody{height:106px;background:#fff;margin-top:1px;padding:2px 3px;display:flex;gap:2px;align-items:flex-start;width:114px}
.peekbody i{display:block;width:6px;height:1px;background:#bbb}
.cursor{position:absolute;left:600px;top:703px}
```
